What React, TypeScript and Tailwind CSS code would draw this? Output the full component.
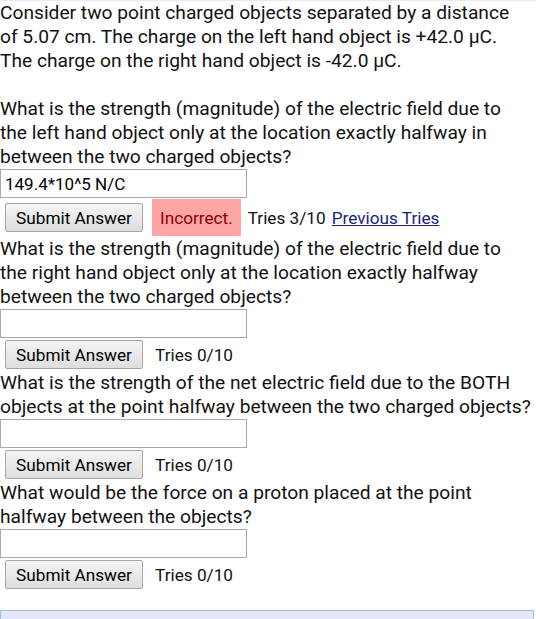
import React from 'react';

type Question = {
  text: string;
  value?: string;
  tries: string;
  incorrect?: boolean;
};

const questions: Question[] = [
  {
    text: 'What is the strength (magnitude) of the electric field due to the left hand object only at the location exactly halfway in between the two charged objects?',
    value: '149.4*10^5 N/C',
    tries: 'Tries 3/10',
    incorrect: true,
  },
  {
    text: 'What is the strength (magnitude) of the electric field due to the right hand object only at the location exactly halfway between the two charged objects?',
    tries: 'Tries 0/10',
  },
  {
    text: 'What is the strength of the net electric field due to the BOTH objects at the point halfway between the two charged objects?',
    tries: 'Tries 0/10',
  },
  {
    text: 'What would be the force on a proton placed at the point halfway between the objects?',
    tries: 'Tries 0/10',
  },
];

function AnswerBlock({ q }: { q: Question }) {
  return (
    <div>
      <p>{q.text}</p>
      <input
        type="text"
        defaultValue={q.value ?? ''}
        className="block h-[29px] w-[247px] border border-[#a9a9a9] bg-white px-[4px] text-[17px] text-black outline-none"
      />
      <div className="mt-[1px] flex min-h-[31px] items-center text-[17.2px]">
        <button className="ml-[5px] h-[29px] w-[138px] rounded-[2px] border border-[#a6a6a6] bg-gradient-to-b from-[#f4f4f4] to-[#dedede] text-[17.2px] text-black">
          Submit Answer
        </button>
        {q.incorrect ? (
          <>
            <span className="ml-[9px] flex h-[37px] items-center bg-[#ffa4a4] px-[8px] text-[#8b0000]">
              Incorrect.
            </span>
            <span className="ml-[7px]">{q.tries}</span>
            <a href="#" className="ml-[6px] text-[#1a237e] underline">
              Previous Tries
            </a>
          </>
        ) : (
          <span className="ml-[12px]">{q.tries}</span>
        )}
      </div>
    </div>
  );
}

export default function App() {
  return (
    <div className="min-h-screen overflow-hidden bg-white font-['Roboto',sans-serif] text-[19.2px] leading-[24px] text-[#111]">
      <div className="h-[1px] bg-[#e8e8f8]" />
      <div className="w-[532px]">
        <p className="w-[526px]">
          Consider two point charged objects separated by a distance of 5.07 cm. The charge on the left hand object is +42.0 μC. The charge on the right hand object is -42.0 μC.
        </p>
        <p className="h-[24px]" />
        <div className="space-y-[1px]">
          {questions.map((q, i) => (
            <AnswerBlock key={i} q={q} />
          ))}
        </div>
      </div>
      <div className="mt-[20px] mr-[2px] h-[30px] border border-[#9cc3e4] bg-[#e6e6fa]" />
    </div>
  );
}
